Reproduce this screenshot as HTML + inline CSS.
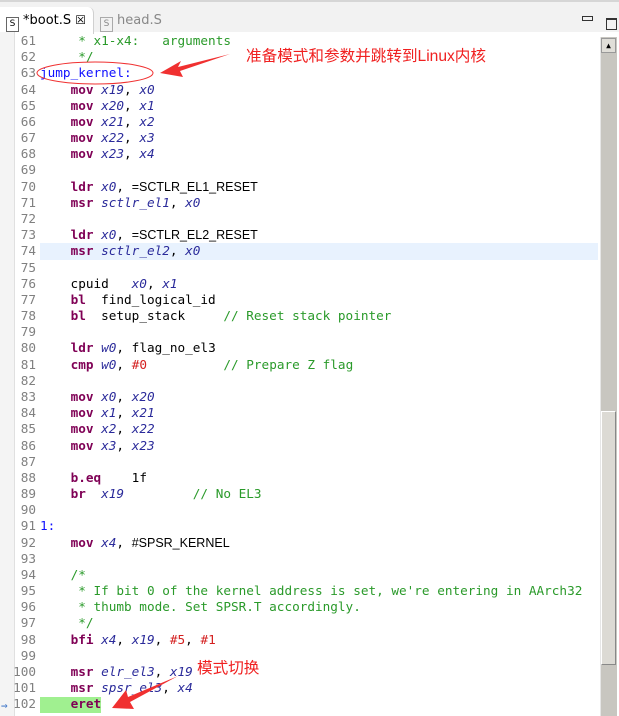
<!DOCTYPE html>
<html><head><meta charset="utf-8"><style>
body{margin:0;width:619px;height:716px;overflow:hidden;background:#fff;position:relative;font-family:"DejaVu Sans Mono",monospace}
.tabbar{position:absolute;left:0;top:0;width:619px;height:32px;background:#f2f2f2;border-top:2px solid #d6d6d6;box-sizing:border-box}
.tab{position:absolute;top:5px;height:27px;font:13px "DejaVu Sans",sans-serif;line-height:27px}
.gut{position:absolute;left:0;top:32px;width:14px;height:684px;background:#f4f4f4;border-right:1px solid #e0e0e0}
.ln{position:absolute;left:0;width:36px;text-align:right;color:#808080;font-size:12.7px;height:16.2px;line-height:16.2px}
.cd{position:absolute;left:40px;white-space:pre;font-size:12.7px;height:16.2px;line-height:16.2px;color:#000}
.k{color:#7f0055;font-weight:bold}.r{color:#2a2a9a;font-style:italic}.c{color:#2a9a2a}.n{color:#d42020}.l{color:#1010ff}
.s{font-family:"Liberation Sans",sans-serif;font-size:12.5px}
.ann{position:absolute;color:#f02020;font:15.6px "Liberation Sans","Noto Sans CJK SC",sans-serif}
</style></head><body>
<div class="tabbar">
<div class="tab" style="left:0;width:93px;background:#fff;border-top-right-radius:6px;border-right:1px solid #d0d0d0"><span style="display:inline-block;width:11px;height:13px;border:1px solid #666;margin:0 4px 0 6px;vertical-align:-2px;font-size:9px;line-height:12px;text-align:center">S</span>*boot.S <span style="font-size:12px">☒</span></div>
<div class="tab" style="left:100px;color:#888"><span style="display:inline-block;width:11px;height:13px;border:1px solid #aaa;margin-right:4px;vertical-align:-2px;font-size:9px;line-height:12px;text-align:center">S</span>head.S</div>
<div style="position:absolute;left:582px;top:14px;width:9px;height:3px;border:1px solid #333"></div>
<div style="position:absolute;left:606px;top:16px;width:9px;height:9px;border:1px solid #333;border-top-width:2px"></div>
</div>
<div class="gut"></div>
<div style="position:absolute;left:40px;top:243px;width:558px;height:17px;background:#e8f2fe"></div>
<div style="position:absolute;left:40px;top:697px;width:61px;height:16px;background:#a0f090"></div>
<div style="position:absolute;left:600px;top:37px;width:16px;height:679px;background:#c8c6c0;border-left:1px solid #e6e6e6"></div>
<div style="position:absolute;left:601px;top:38px;width:13px;height:13px;background:#e0ded8;border:1px solid #999;font-size:8px;text-align:center;line-height:13px">▲</div>
<div style="position:absolute;left:601px;top:411px;width:13px;height:252px;background:#dcdad4;border:1px solid #888;border-left-color:#fff;border-top-color:#fff"></div>
<div id="code"></div>
<script>
var L=[
[61,'     <span class="c">* x1-x4:   arguments</span>'],
[62,'     <span class="c">*/</span>'],
[63,'<span class="l">jump_kernel:</span>'],
[64,'    <span class="k">mov</span> <span class="r">x19</span>, <span class="r">x0</span>'],
[65,'    <span class="k">mov</span> <span class="r">x20</span>, <span class="r">x1</span>'],
[66,'    <span class="k">mov</span> <span class="r">x21</span>, <span class="r">x2</span>'],
[67,'    <span class="k">mov</span> <span class="r">x22</span>, <span class="r">x3</span>'],
[68,'    <span class="k">mov</span> <span class="r">x23</span>, <span class="r">x4</span>'],
[69,''],
[70,'    <span class="k">ldr</span> <span class="r">x0</span>, <span class="s">=SCTLR_EL1_RESET</span>'],
[71,'    <span class="k">msr</span> <span class="r">sctlr_el1</span>, <span class="r">x0</span>'],
[72,''],
[73,'    <span class="k">ldr</span> <span class="r">x0</span>, <span class="s">=SCTLR_EL2_RESET</span>'],
[74,'    <span class="k">msr</span> <span class="r">sctlr_el2</span>, <span class="r">x0</span>'],
[75,''],
[76,'    cpuid   <span class="r">x0</span>, <span class="r">x1</span>'],
[77,'    <span class="k">bl</span>  find_logical_id'],
[78,'    <span class="k">bl</span>  setup_stack     <span class="c">// Reset stack pointer</span>'],
[79,''],
[80,'    <span class="k">ldr</span> <span class="r">w0</span>, flag_no_el3'],
[81,'    <span class="k">cmp</span> <span class="r">w0</span>, <span class="n">#0</span>          <span class="c">// Prepare Z flag</span>'],
[82,''],
[83,'    <span class="k">mov</span> <span class="r">x0</span>, <span class="r">x20</span>'],
[84,'    <span class="k">mov</span> <span class="r">x1</span>, <span class="r">x21</span>'],
[85,'    <span class="k">mov</span> <span class="r">x2</span>, <span class="r">x22</span>'],
[86,'    <span class="k">mov</span> <span class="r">x3</span>, <span class="r">x23</span>'],
[87,''],
[88,'    <span class="k">b.eq</span>    1f'],
[89,'    <span class="k">br</span>  <span class="r">x19</span>         <span class="c">// No EL3</span>'],
[90,''],
[91,'<span class="l">1:</span>'],
[92,'    <span class="k">mov</span> <span class="r">x4</span>, <span class="s">#SPSR_KERNEL</span>'],
[93,''],
[94,'    <span class="c">/*</span>'],
[95,'     <span class="c">* If bit 0 of the kernel address is set, we\'re entering in AArch32</span>'],
[96,'     <span class="c">* thumb mode. Set SPSR.T accordingly.</span>'],
[97,'     <span class="c">*/</span>'],
[98,'    <span class="k">bfi</span> <span class="r">x4</span>, <span class="r">x19</span>, <span class="n">#5</span>, <span class="n">#1</span>'],
[99,''],
[100,'    <span class="k">msr</span> <span class="r">elr_el3</span>, <span class="r">x19</span>'],
[101,'    <span class="k">msr</span> <span class="r">spsr_el3</span>, <span class="r">x4</span>'],
[102,'    <span class="k">eret</span>']];
var h='';L.forEach(function(a){var t=33+(a[0]-61)*16.18;h+='<div class="ln" style="top:'+t+'px">'+a[0]+'</div><div class="cd" style="top:'+t+'px">'+a[1]+'</div>';});
document.getElementById('code').innerHTML=h;
</script>
<div style="position:absolute;left:1px;top:699px;color:#2060c0;font-size:11px">⇒</div>
<div class="ann" style="left:246px;top:44px">准备模式和参数并跳转到Linux内核</div>
<div class="ann" style="left:197px;top:656px">模式切换</div>
<svg style="position:absolute;left:0;top:0" width="619" height="716">
<ellipse cx="95" cy="73" rx="58" ry="11" fill="none" stroke="#f03030" stroke-width="1"/>
<path d="M230 54 L178 67 L181 61 L160 73 L183 77 L180 71 Z" fill="#f03030"/>
<path d="M178 676 L128 697 L126 690 L112 708 L134 709 L130 702 Z" fill="#f03030"/>
</svg>
</body></html>
